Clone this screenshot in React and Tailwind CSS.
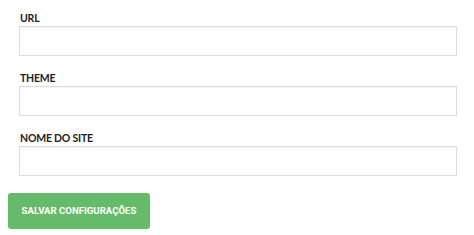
export default function App() {
  const fields = ["URL", "THEME", "NOME DO SITE"];

  return (
    <div className="w-[474px] h-[235px] bg-white pt-[10px]" style={{ fontFamily: "Lato, 'Open Sans', sans-serif" }}>
      <div className="pl-[19px] flex flex-col gap-[14px]">
        {fields.map((f) => (
          <div key={f} className="flex flex-col">
            <label className="pl-px text-[10.5px] leading-[16px] font-bold tracking-[-0.2px] text-[#222]">{f}</label>
            <input
              type="text"
              className="w-[438px] h-[30px] border border-[#dcdcdc] bg-white shadow-[inset_0_1px_1px_rgba(0,0,0,0.04)] outline-none"
            />
          </div>
        ))}
      </div>
      <div className="pl-2 mt-[17px]">
        <button
          className="w-[142px] h-[36px] rounded-[3px] bg-[#66bb6a] text-white text-[9.6px] font-bold"
          style={{ fontFamily: "Roboto, 'Liberation Sans', sans-serif" }}
        >
          SALVAR CONFIGURAÇÕES
        </button>
      </div>
    </div>
  );
}
